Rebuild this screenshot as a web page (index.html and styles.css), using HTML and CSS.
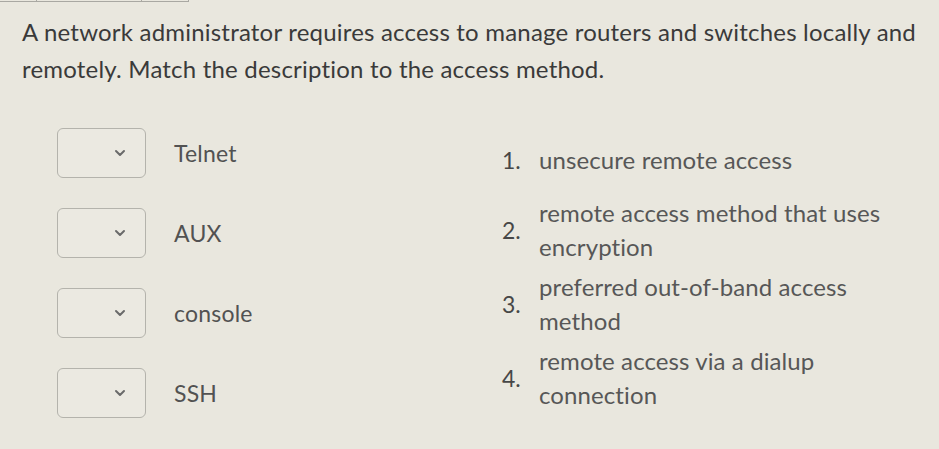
FILE: index.html
```html
<!DOCTYPE html>
<html lang="en">
<head>
    <meta charset="UTF-8">
    <meta name="viewport" content="width=device-width, initial-scale=1.0">
    <title>Match the description to the access method</title>
    <link rel="stylesheet" href="styles.css">
</head>
<body>
    <div class="prev-table">
        <span class="cell cell-a"></span>
        <span class="cell cell-b"></span>
        <span class="cell cell-c"></span>
    </div>

    <p class="question">A network administrator requires access to manage routers and switches locally and remotely. Match the description to the access method.</p>

    <div class="match">
        <div class="choices">
            <div class="choice">
                <div class="select">
                    <svg class="chevron" viewBox="0 0 12 8"><path d="M2 2l4 4 4-4"/></svg>
                </div>
                <span class="label">Telnet</span>
            </div>
            <div class="choice">
                <div class="select">
                    <svg class="chevron" viewBox="0 0 12 8"><path d="M2 2l4 4 4-4"/></svg>
                </div>
                <span class="label">AUX</span>
            </div>
            <div class="choice">
                <div class="select">
                    <svg class="chevron" viewBox="0 0 12 8"><path d="M2 2l4 4 4-4"/></svg>
                </div>
                <span class="label">console</span>
            </div>
            <div class="choice">
                <div class="select">
                    <svg class="chevron" viewBox="0 0 12 8"><path d="M2 2l4 4 4-4"/></svg>
                </div>
                <span class="label">SSH</span>
            </div>
        </div>

        <ol class="options">
            <li><span class="num">1.</span><span class="text">unsecure remote access</span></li>
            <li><span class="num">2.</span><span class="text">remote access method that uses encryption</span></li>
            <li><span class="num">3.</span><span class="text">preferred out-of-band access method</span></li>
            <li><span class="num">4.</span><span class="text">remote access via a dialup connection</span></li>
        </ol>
    </div>
</body>
</html>
```

FILE: styles.css
```css
body {
    font-family: 'Lato', 'Open Sans', sans-serif;
    margin: 0;
    padding: 0;
    background: #e9e7de;
    color: #3c3c3c;
    overflow: hidden;
}

/* bottom edge of the table above the question */
.prev-table {
    display: flex;
    height: 2px;
}

.cell {
    border-bottom: 1px solid #a9a8a2;
    border-right: 1px solid #a9a8a2;
}

.cell-a { width: 36px; }
.cell-b { width: 104px; }
.cell-c { width: 46px; }

.question {
    margin: 0;
    padding: 11px 10px 0 22px;
    font-size: 24px;
    letter-spacing: 0.2px;
    line-height: 37px;
    color: #3a3a3a;
}

.match {
    display: flex;
    padding-top: 41px;
}

.choices {
    display: flex;
    flex-direction: column;
    gap: 30px;
    padding-left: 57px;
    width: 380px;
}

.choice {
    display: flex;
    align-items: center;
    gap: 28px;
}

.select {
    width: 89px;
    height: 50px;
    border: 1.5px solid #b4b3ac;
    border-radius: 6px;
    background: #ebe9e1;
    display: flex;
    align-items: center;
    padding-left: 56px;
    box-sizing: border-box;
}

.chevron {
    width: 12px;
    height: 8px;
    fill: none;
    stroke: #6a6a6a;
    stroke-width: 2;
    stroke-linecap: round;
    stroke-linejoin: round;
}

.label {
    font-size: 23px;
    letter-spacing: 0.2px;
    color: #525252;
}

.options {
    list-style: none;
    margin: 2px 0 0;
    padding: 0 0 0 65px;
    display: flex;
    flex-direction: column;
    gap: 6px;
}

.options li {
    display: flex;
    align-items: center;
    min-height: 60px;
}

.num {
    width: 37px;
    font-size: 23px;
    color: #474747;
}

.text {
    width: 355px;
    font-size: 24px;
    letter-spacing: 0.1px;
    line-height: 34px;
    color: #575757;
}
```
